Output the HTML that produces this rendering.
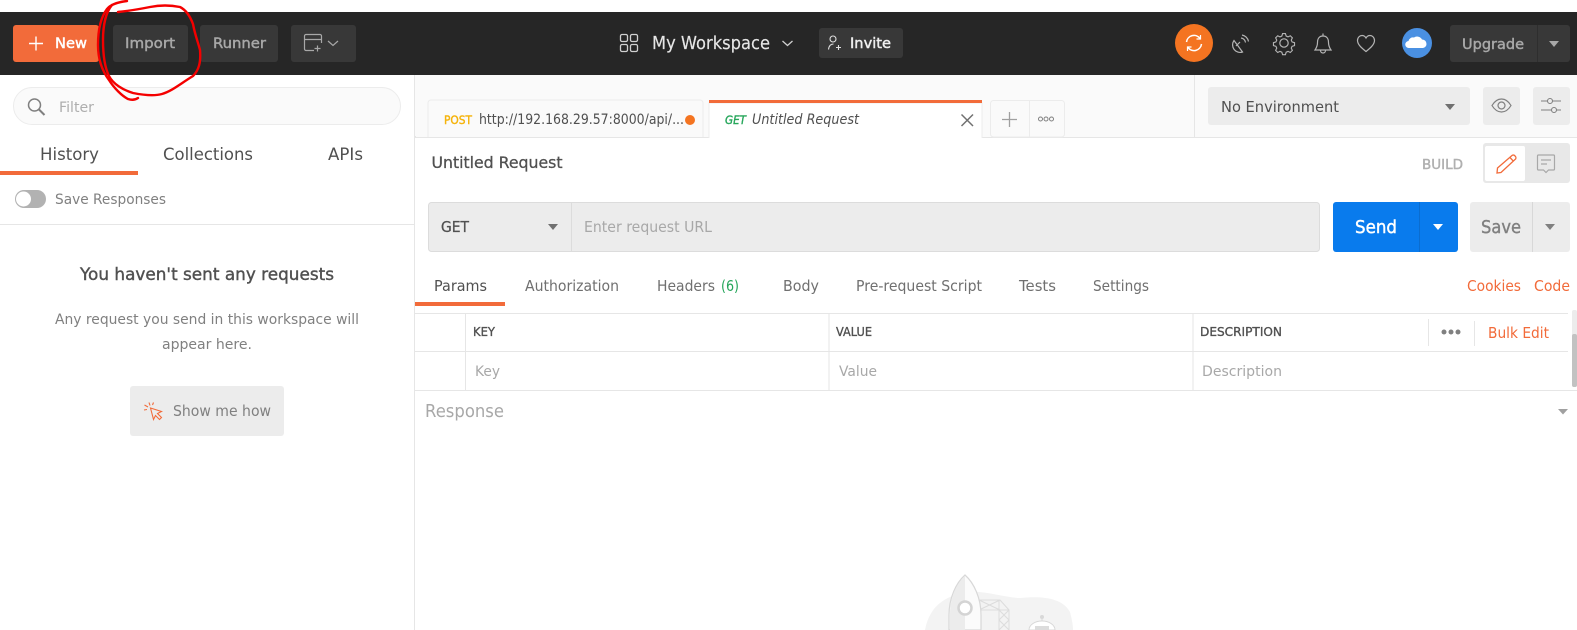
<!DOCTYPE html>
<html><head><meta charset="utf-8"><style>
html,body{margin:0;padding:0;background:#fff;width:1577px;height:630px;overflow:hidden}
svg{display:block}
text{font-family:"DejaVu Sans","Liberation Sans",sans-serif;font-size:14px}
</style></head><body>
<svg width="1577" height="630" viewBox="0 0 1577 630" xmlns="http://www.w3.org/2000/svg">
<rect width="1577" height="630" fill="#fff"/>
<!-- top bar -->
<rect x="0" y="12" width="1577" height="63" fill="#262626"/>
<rect x="13" y="25" width="86" height="37" rx="3" fill="#f26b3a"/>
<path d="M29 43.5H43M36 36.5V50.5" stroke="#fff" stroke-width="1.4" fill="none"/>
<text x="55" y="48" fill="#fff" stroke="#fff" stroke-width=".45" style="font-size:14.5px" textLength="32" lengthAdjust="spacingAndGlyphs">New</text>
<rect x="113" y="25" width="75" height="37" rx="3" fill="#383838"/>
<text x="125" y="48" fill="#a8a8a8" stroke="#a8a8a8" stroke-width=".45" style="font-size:14.5px" textLength="50" lengthAdjust="spacingAndGlyphs">Import</text>
<rect x="200" y="25" width="78" height="37" rx="3" fill="#383838"/>
<text x="213" y="48" fill="#a8a8a8" stroke="#a8a8a8" stroke-width=".45" style="font-size:14.5px" textLength="53" lengthAdjust="spacingAndGlyphs">Runner</text>
<rect x="291" y="25" width="65" height="37" rx="3" fill="#383838"/>
<g stroke="#a8a8a8" stroke-width="1.2" fill="none">
<path d="M314 50.5H306a1.5 1.5 0 0 1-1.5-1.5V36a1.5 1.5 0 0 1 1.5-1.5H320a1.5 1.5 0 0 1 1.5 1.5V43M304.5 39.5H321.5M317.5 45.5V51.5M314.5 48.5H320.5"/>
<path d="M328 41L333 45.5L338 41"/>
</g>
<!-- workspace -->
<g stroke="#d0d0d0" stroke-width="1.3" fill="none">
<rect x="620.5" y="34.5" width="7" height="7" rx="1.5"/><rect x="630.5" y="34.5" width="7" height="7" rx="1.5"/>
<rect x="620.5" y="44.5" width="7" height="7" rx="1.5"/><rect x="630.5" y="44.5" width="7" height="7" rx="1.5"/>
<path d="M782.5 41L787.5 45.5L792.5 41"/>
</g>
<text x="652" y="49" style="font-size:18px" fill="#e6e6e6" stroke="#e6e6e6" stroke-width=".15" textLength="118" lengthAdjust="spacingAndGlyphs">My Workspace</text>
<rect x="819" y="28" width="84" height="30" rx="3" fill="#383838"/>
<g stroke="#e0e0e0" stroke-width="1.1" fill="none">
<circle cx="833" cy="39" r="3"/><path d="M828.5 49.5C829 45.5 831 44 833.5 44M836 47.5H841M838.5 45V50"/>
</g>
<text x="850" y="48" fill="#f0f0f0" stroke="#f0f0f0" stroke-width=".45" style="font-size:14.5px" textLength="41" lengthAdjust="spacingAndGlyphs">Invite</text>
<!-- right icons -->
<circle cx="1194" cy="43" r="19" fill="#f47421"/>
<g stroke="#fff" stroke-width="1.5" fill="none">
<path d="M1186.5 42a7.5 7.5 0 0 1 13.5-3.5M1201.5 44a7.5 7.5 0 0 1-13.5 3.5"/>
<path d="M1200.5 35v4h-4M1187.5 51v-4h4" stroke-width="1.2"/>
</g>
<g stroke="#b4b4b4" stroke-width="1.2" fill="none">
<g transform="translate(-2,0)">
<path d="M1236 40.5a7.5 7.5 0 0 0 8.5 11.5z"/><path d="M1238 46l4-4"/>
<path d="M1243 38a5 5 0 0 1 4.5 4.5M1244 35a8 8 0 0 1 6.5 6.5"/>
</g>
<path d="M1282.5 33l3 0 .8 2.6 2 .9 2.4-1.200 2.2 2.200-1.200 2.400.9 2 2.600.8 0 3-2.600.8-.9 2 1.200 2.400-2.200 2.200-2.400-1.200-2 .9-.8 2.600-3 0-.8-2.600-2-.9-2.400 1.200-2.200-2.200 1.200-2.400-.9-2-2.600-.8 0-3 2.600-.8.9-2-1.200-2.400 2.200-2.200 2.400 1.200 2-.9z" transform="translate(1284,43) scale(.94) translate(-1284,-43)"/>
<circle cx="1284" cy="43" r="4.200"/>
<g transform="translate(1,0)">
<path d="M1322 36c-4 0-5.500 3-5.500 6.500 0 3.500-1.500 6-2.500 7.500h16c-1-1.500-2.500-4-2.500-7.500 0-3.500-1.500-6.500-5.500-6.500zM1322 36v-2.500M1319.500 50.500a2.500 2.500 0 0 0 5 0"/>
</g>
<path d="M1366 51.500c-3-2.500-8.500-6.500-8.500-11 0-3 2.200-5 4.500-5 1.800 0 3.200 1 4 2.500.8-1.500 2.200-2.500 4-2.500 2.300 0 4.500 2 4.500 5 0 4.500-5.500 8.500-8.500 11z"/>
</g>
<circle cx="1417" cy="43" r="15" fill="#4a90e2"/>
<path d="M1409 48a3.500 3.500 0 0 1-.5-7 4.500 4.500 0 0 1 5.500-3.500 5.500 5.500 0 0 1 8 2 4.300 4.300 0 0 1 4.500 4.500 4 4 0 0 1-3.500 4z" fill="#fff"/>
<rect x="1450" y="25" width="120" height="37" rx="3" fill="#383838"/>
<rect x="1537" y="25" width="1" height="37" fill="#2e2e2e"/>
<text x="1462" y="49" fill="#a8a8a8" stroke="#a8a8a8" stroke-width=".45" style="font-size:14.500px" textLength="62" lengthAdjust="spacingAndGlyphs">Upgrade</text>
<path d="M1549 41H1559L1554 47z" fill="#a8a8a8"/>
<!-- sidebar -->
<rect x="414" y="75" width="1" height="555" fill="#e6e6e6"/>
<rect x="13.500" y="87.500" width="387" height="37" rx="18.500" fill="#fafafa" stroke="#ececec"/>
<g stroke="#808080" stroke-width="1.500" fill="none"><circle cx="34.500" cy="105" r="6"/><path d="M39 109.500L44.500 115" stroke-width="2"/></g>
<text x="59" y="112" fill="#aeaeae" style="font-size:14.500px" textLength="35" lengthAdjust="spacingAndGlyphs">Filter</text>
<text x="40" y="160" fill="#505050" style="font-size:17px" textLength="59" lengthAdjust="spacingAndGlyphs">History</text>
<text x="163" y="160" fill="#505050" style="font-size:17px" textLength="90" lengthAdjust="spacingAndGlyphs">Collections</text>
<text x="328" y="160" fill="#505050" style="font-size:17px" textLength="35" lengthAdjust="spacingAndGlyphs">APIs</text>
<rect x="0" y="171" width="138" height="4" fill="#f26b3a"/>
<rect x="15" y="190" width="31" height="18" rx="9" fill="#b2b2b2"/>
<circle cx="23.500" cy="199" r="7.500" fill="#fff"/>
<text x="55" y="204" fill="#808080" style="font-size:14.500px" textLength="111" lengthAdjust="spacingAndGlyphs">Save Responses</text>
<rect x="0" y="224" width="414" height="1" fill="#e6e6e6"/>
<text x="80" y="280" fill="#505050" stroke="#505050" stroke-width=".4" style="font-size:17px" textLength="254" lengthAdjust="spacingAndGlyphs">You haven't sent any requests</text>
<text x="55" y="324" fill="#808080" style="font-size:14.500px" textLength="304" lengthAdjust="spacingAndGlyphs">Any request you send in this workspace will</text>
<text x="162" y="349" fill="#808080" style="font-size:14.500px" textLength="90" lengthAdjust="spacingAndGlyphs">appear here.</text>
<rect x="130" y="386" width="154" height="50" rx="3" fill="#ececec"/>
<g stroke="#f26b3a" stroke-width="1.100" fill="none">
<path d="M150.500 408L161.500 411.500L157.500 413.500L161.500 417.500L159.500 419.500L155.500 415.500L153.500 419.500z"/>
<path d="M144.500 405L148 407M149 402.500L150 405.500M153.500 402.500L152.500 405M144 410L147 409.500"/>
</g>
<text x="173" y="416" fill="#808080" style="font-size:15px" textLength="98" lengthAdjust="spacingAndGlyphs">Show me how</text>
<!-- tab band -->
<rect x="415" y="75" width="1162" height="62" fill="#fafafa"/>
<rect x="415" y="137" width="1162" height="1" fill="#e6e6e6"/>
<rect x="1194" y="75" width="1" height="62" fill="#e6e6e6"/>
<rect x="1208" y="87" width="262" height="38" rx="3" fill="#ececec"/>
<text x="1221" y="112" fill="#505050" style="font-size:15px" textLength="118" lengthAdjust="spacingAndGlyphs">No Environment</text>
<path d="M1445 104H1455L1450 110z" fill="#707070"/>
<rect x="1483" y="87" width="37" height="38" rx="3" fill="#ececec"/>
<path d="M1492 105.500C1495 100.500 1498 99 1501.500 99C1505 99 1508 100.500 1511 105.500C1508 110.500 1505 112 1501.500 112C1498 112 1495 110.500 1492 105.500z" stroke="#808080" stroke-width="1.200" fill="none"/>
<circle cx="1501.500" cy="105.500" r="3.500" stroke="#808080" stroke-width="1.200" fill="none"/>
<rect x="1533" y="87" width="37" height="38" rx="3" fill="#ececec"/>
<g stroke="#808080" stroke-width="1.100" fill="none">
<path d="M1541 101H1547M1553 101H1561M1541 110H1551M1557 110H1561"/><circle cx="1550" cy="101" r="2.500"/><circle cx="1554" cy="110" r="2.500"/>
</g>
<!-- tabs -->
<path d="M428 137V103a3 3 0 0 1 3-3H700a3 3 0 0 1 3 3V137" fill="#fafafa" stroke="#ececec"/>
<text x="444" y="124" fill="#f5b30a" stroke="#f5b30a" stroke-width=".4" style="font-size:11.500px" textLength="28" lengthAdjust="spacingAndGlyphs">POST</text>
<text x="479" y="124" fill="#505050" style="font-size:14.500px" textLength="205" lengthAdjust="spacingAndGlyphs">http://192.168.29.57:8000/api/...</text>
<circle cx="690" cy="120" r="5" fill="#f47421"/>
<path d="M709 138V103H982V138" fill="#fff" stroke="#ececec"/>
<rect x="709" y="100" width="273" height="3" fill="#f26b3a"/>
<text x="725" y="124" fill="#26a65b" stroke="#26a65b" stroke-width=".4" style="font-size:11.500px;font-style:italic" textLength="21" lengthAdjust="spacingAndGlyphs">GET</text>
<text x="752" y="124" fill="#505050" style="font-style:italic;font-size:14.500px" textLength="107" lengthAdjust="spacingAndGlyphs">Untitled Request</text>
<path d="M961.500 114.500L973 126M973 114.500L961.500 126" stroke="#707070" stroke-width="1.500"/>
<rect x="990.500" y="100.500" width="74" height="36.500" rx="3" fill="#fafafa" stroke="#ececec"/>
<rect x="1029" y="101" width="1" height="36" fill="#ececec"/>
<path d="M1002 119.500H1017M1009.500 112V127" stroke="#a0a0a0" stroke-width="1.300"/>
<g stroke="#808080" fill="none"><circle cx="1040.500" cy="119" r="2"/><circle cx="1046" cy="119" r="2"/><circle cx="1051.500" cy="119" r="2"/></g>
<rect x="415" y="136" width="1" height="2" fill="#e6e6e6"/>
<!-- title row -->
<text x="431.500" y="168" fill="#505050" stroke="#505050" stroke-width=".3" style="font-size:16px" textLength="131" lengthAdjust="spacingAndGlyphs">Untitled Request</text>
<text x="1422" y="169" fill="#b0b0b0" stroke="#b0b0b0" stroke-width=".45" style="font-size:13.500px" textLength="41" lengthAdjust="spacingAndGlyphs">BUILD</text>
<rect x="1483" y="143" width="87" height="40" rx="3" fill="#e8e8e8"/>
<rect x="1485" y="146" width="40" height="35" rx="2" fill="#fff"/>
<path d="M1497.500 168L1512 155.500a2 2 0 0 1 3 .5l.5.5a2 2 0 0 1-.5 3L1501 172.500L1497 173z M1510 157.500l3.500 3.800" stroke="#f26b3a" stroke-width="1.300" fill="none"/>
<path d="M1538.500 155h15a1 1 0 0 1 1 1v13a1 1 0 0 1-1 1h-5l-2.500 2.500-2.500-2.500h-5a1 1 0 0 1-1-1v-13a1 1 0 0 1 1-1zM1541 160h10M1541 164h6" stroke="#a8a8a8" stroke-width="1.200" fill="none"/>
<!-- URL row -->
<rect x="428.500" y="202.500" width="891" height="49" rx="3" fill="#ececec" stroke="#dcdcdc"/>
<rect x="571" y="203" width="1" height="48" fill="#dcdcdc"/>
<text x="441" y="232" fill="#505050" stroke="#505050" stroke-width=".3" style="font-size:15px" textLength="28" lengthAdjust="spacingAndGlyphs">GET</text>
<path d="M548 224H558L553 230z" fill="#707070"/>
<text x="584" y="232" fill="#a8a8a8" style="font-size:15px" textLength="128" lengthAdjust="spacingAndGlyphs">Enter request URL</text>
<rect x="1333" y="202" width="125" height="50" rx="3" fill="#097bed"/>
<rect x="1419" y="202" width="1" height="50" fill="#0a6dd0"/>
<text x="1355" y="233" fill="#fff" stroke="#fff" stroke-width=".45" style="font-size:18px" textLength="42" lengthAdjust="spacingAndGlyphs">Send</text>
<path d="M1433 224H1443L1438 230z" fill="#fff"/>
<rect x="1470" y="202" width="100" height="50" rx="3" fill="#ececec"/>
<rect x="1532" y="202" width="1" height="50" fill="#d8d8d8"/>
<text x="1481" y="233" fill="#808080" stroke="#808080" stroke-width=".4" style="font-size:18px" textLength="40" lengthAdjust="spacingAndGlyphs">Save</text>
<path d="M1545 224H1555L1550 230z" fill="#808080"/>
<!-- params tabs -->
<g fill="#707070" style="font-size:15px">
<text x="434" y="291" fill="#505050" style="font-size:15px" textLength="53" lengthAdjust="spacingAndGlyphs">Params</text>
<text x="525" y="291" style="font-size:15px" textLength="94" lengthAdjust="spacingAndGlyphs">Authorization</text>
<text x="657" y="291" style="font-size:15px" textLength="58" lengthAdjust="spacingAndGlyphs">Headers</text>
<text x="721" y="291" fill="#26a65b" style="font-size:15px" textLength="18" lengthAdjust="spacingAndGlyphs">(6)</text>
<text x="783" y="291" style="font-size:15px" textLength="36" lengthAdjust="spacingAndGlyphs">Body</text>
<text x="856" y="291" style="font-size:15px" textLength="126" lengthAdjust="spacingAndGlyphs">Pre-request Script</text>
<text x="1019" y="291" style="font-size:15px" textLength="37" lengthAdjust="spacingAndGlyphs">Tests</text>
<text x="1093" y="291" style="font-size:15px" textLength="56" lengthAdjust="spacingAndGlyphs">Settings</text>
</g>
<text x="1467" y="291" fill="#f26b3a" style="font-size:15px" textLength="54" lengthAdjust="spacingAndGlyphs">Cookies</text>
<text x="1534" y="291" fill="#f26b3a" style="font-size:15px" textLength="36" lengthAdjust="spacingAndGlyphs">Code</text>
<rect x="415" y="302" width="90" height="4" fill="#f26b3a"/>
<!-- table -->
<g fill="#e6e6e6">
<rect x="415" y="313" width="1153" height="1"/>
<rect x="415" y="351" width="1153" height="1"/>
<rect x="415" y="390" width="1162" height="1"/>
<rect x="465" y="314" width="1" height="76"/>
<rect x="828.500" y="314" width="1" height="76"/>
<rect x="1192.500" y="314" width="1" height="76"/>
<rect x="1428" y="319" width="1" height="27"/>
<rect x="1474" y="321" width="1" height="25"/>
</g>
<text x="473" y="336" fill="#505050" stroke="#505050" stroke-width=".35" style="font-size:12.500px" textLength="22" lengthAdjust="spacingAndGlyphs">KEY</text>
<text x="836" y="336" fill="#505050" stroke="#505050" stroke-width=".35" style="font-size:12.500px" textLength="36" lengthAdjust="spacingAndGlyphs">VALUE</text>
<text x="1200" y="336" fill="#505050" stroke="#505050" stroke-width=".35" style="font-size:12.500px" textLength="82" lengthAdjust="spacingAndGlyphs">DESCRIPTION</text>
<circle cx="1444" cy="332" r="2.500" fill="#808080"/><circle cx="1451" cy="332" r="2.500" fill="#808080"/><circle cx="1458" cy="332" r="2.500" fill="#808080"/>
<text x="1488" y="338" fill="#f26b3a" style="font-size:15px" textLength="61" lengthAdjust="spacingAndGlyphs">Bulk Edit</text>
<text x="475" y="376" fill="#a8a8a8" style="font-size:14.500px" textLength="25" lengthAdjust="spacingAndGlyphs">Key</text>
<text x="839" y="376" fill="#a8a8a8" style="font-size:14.500px" textLength="38" lengthAdjust="spacingAndGlyphs">Value</text>
<text x="1202" y="376" fill="#a8a8a8" style="font-size:14.500px" textLength="80" lengthAdjust="spacingAndGlyphs">Description</text>
<rect x="1572" y="310" width="5" height="77" rx="2" fill="#ececec"/>
<rect x="1572" y="334" width="5" height="53" rx="2" fill="#c2c2c2"/>
<text x="425" y="417" fill="#a8a8a8" style="font-size:18px" textLength="79" lengthAdjust="spacingAndGlyphs">Response</text>
<path d="M1558 409H1568L1563 414.500z" fill="#a0a0a0"/>
<!-- illustration -->
<path d="M925 630C930 605 945 597 965 592C985 590 1005 598 1020 598C1040 596 1062 597 1070 612C1072 620 1073 625 1073 630z" fill="#f3f3f3"/>
<g stroke="#dcdcdc" stroke-width="1" fill="none">
<path d="M979 600H1000L1009 610V630M979 610H1009M999 600V630M979 600L1000 610M1000 600L979 610M999 610L1009 620M1009 610L999 620M999 620L1009 630M1009 620L999 630"/>
</g>
<path d="M965 575C956 583 949 598 949 615V630H981V615C981 598 974 583 965 575z" fill="#fbfbfb" stroke="#d8d8d8" stroke-width="1.200"/>
<path d="M965 576C956 584 950 598 950 615V630H965z" fill="#ececec"/>
<circle cx="965" cy="608" r="6.500" fill="#fff" stroke="#d4d4d4" stroke-width="2.500"/>
<circle cx="1042" cy="617" r="2" fill="#d8d8d8"/><path d="M1042 619V622" stroke="#d8d8d8"/>
<path d="M1029 630a13 9 0 0 1 26 0z" fill="#fff" stroke="#d8d8d8"/>
<rect x="1035" y="626" width="14" height="4" fill="#dcdcdc"/>
<!-- red scribble -->
<g stroke="#f40000" stroke-width="2.400" fill="none" stroke-linecap="round" stroke-linejoin="round">
<path d="M127 1C118 2 111 4 107 9C101 17 98 30 98 45C98 60 103 72 109 80C114 88 122 96 128 99C131 100 135 100 138 98"/>
<path d="M112 5C106 12 103 25 103 40C103 55 105 68 109 76C113 84 123 90 133 93C143 95 155 96 162 94C172 91 180 84 193 76C199 70 201 62 200 50C198 42 195 35 193 24C190 16 186 10 180 7C170 5 160 5 150 7C140 9 128 11 118 12"/>
</g>
</svg>
</body></html>
